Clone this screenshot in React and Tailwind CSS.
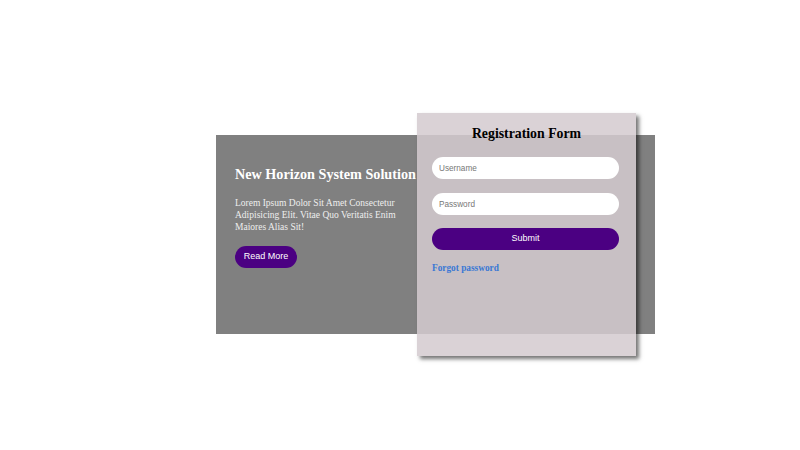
export default function App() {
  return (
    <div className="w-[800px] h-[450px] bg-white pt-[135px] pl-[216px]">
      {/* banner panel */}
      <div className="flex w-[439px] h-[199px] bg-[#808080]">
        <div className="w-[201px] shrink-0 pl-[19px] pt-[29px]" style={{ fontFamily: '"Liberation Serif", serif' }}>
          <h1 className="text-white font-bold text-[14.2px] leading-[20px] whitespace-nowrap">
            New Horizon System Solution
          </h1>
          <p className="mt-[13px] w-[170px] text-[9.5px] leading-[12px] text-[#eeeeee]">
            Lorem Ipsum Dolor Sit Amet Consectetur Adipisicing Elit. Vitae Quo Veritatis Enim Maiores Alias Sit!
          </p>
          <button
            className="mt-[13px] w-[62px] h-[22px] rounded-full bg-[#4b0082] text-white text-[9px]"
            style={{ fontFamily: '"Liberation Sans", Arial, sans-serif' }}
          >
            Read More
          </button>
        </div>

        {/* registration card */}
        <div className="w-[219px] h-[243px] -mt-[22px] shrink-0 bg-[rgba(212,203,207,0.86)] shadow-[3px_3px_4px_rgba(0,0,0,0.55)] px-[15px] pt-[12px] flex flex-col">
          <h2
            className="text-center font-bold text-[13.8px] leading-[18px] text-black"
            style={{ fontFamily: '"Liberation Serif", serif' }}
          >
            Registration Form
          </h2>
          <div className="flex flex-col gap-[14px] mt-[14px]" style={{ fontFamily: '"Liberation Sans", Arial, sans-serif' }}>
            <input
              placeholder="Username"
              className="w-[187px] h-[22px] rounded-full bg-white px-[7px] text-[8.2px] text-gray-700 placeholder:text-[#777] outline-none"
            />
            <input
              placeholder="Password"
              type="password"
              className="w-[187px] h-[22px] rounded-full bg-white px-[7px] text-[8.2px] text-gray-700 placeholder:text-[#777] outline-none"
            />
          </div>
          <button
            className="mt-[13px] w-[187px] h-[22px] rounded-full bg-[#4b0082] text-white text-[9px]"
            style={{ fontFamily: '"Liberation Sans", Arial, sans-serif' }}
          >
            Submit
          </button>
          <a
            href="#"
            className="mt-[12px] text-[9.3px] font-bold text-[#3a78d4] leading-[12px]"
            style={{ fontFamily: '"Liberation Serif", serif' }}
          >
            Forgot password
          </a>
        </div>
      </div>
    </div>
  );
}
